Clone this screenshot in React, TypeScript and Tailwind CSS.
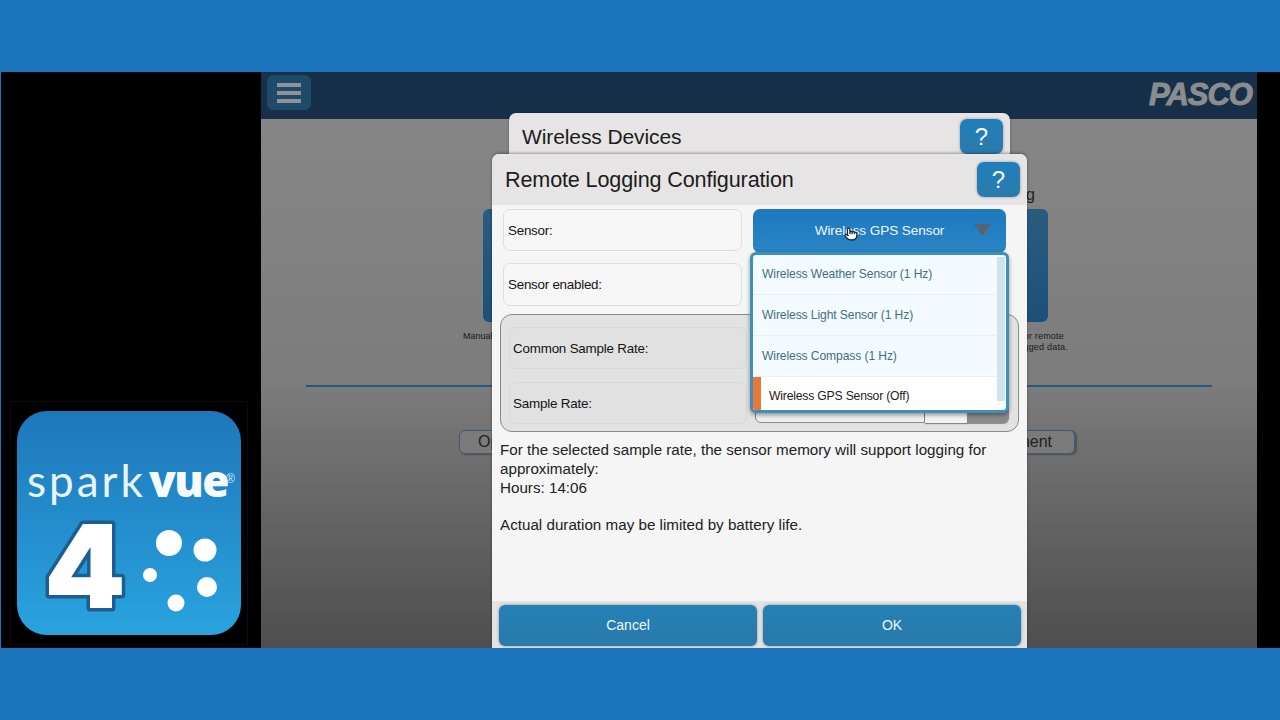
import React from "react";
import { Pointer } from "lucide-react";

const sans = "font-['Liberation_Sans',Arial,sans-serif]";

function HelpButton() {
  return (
    <div className="flex h-[35px] w-[43px] items-center justify-center rounded-[7px] bg-gradient-to-b from-[#1f7fbd] to-[#2b7bab] text-[24px] leading-none text-[#f4f8fb] shadow-[0_0_3px_rgba(0,0,0,0.35)]">
      ?
    </div>
  );
}

function LabelBox({ text, grey, short }: { text: string; grey?: boolean; short?: boolean }) {
  if (grey) {
    return (
      <div className="flex h-[42px] w-[238px] items-center rounded-[7px] border border-[#d8d8d8] bg-[#e1e1e1] pl-[3px] pt-[2px] text-[13.4px] tracking-[-0.2px] text-[#141414]">
        {text}
      </div>
    );
  }
  return (
    <div
      className={
        short
          ? "flex h-[42px] w-[239px] items-center rounded-[7px] border border-[#dedede] bg-[#f6f6f6] pl-[4px] pt-[2px] text-[13.4px] tracking-[-0.25px] text-[#141414]"
          : "flex h-[43px] w-[239px] items-center rounded-[7px] border border-[#dedede] bg-[#f6f6f6] pl-[4px] pt-[2px] text-[13.4px] tracking-[-0.25px] text-[#141414]"
      }
    >
      {text}
    </div>
  );
}

function Logo() {
  return (
    <svg width="224" height="224" viewBox="0 0 224 224" className="block">
      <defs>
        <linearGradient id="lg" x1="0" y1="0" x2="0" y2="1">
          <stop offset="0" stopColor="#1e77bb" />
          <stop offset="1" stopColor="#29a3de" />
        </linearGradient>
      </defs>
      <rect width="224" height="224" rx="30" fill="url(#lg)" />
      <text x="10" y="86" fontFamily="Lato, sans-serif" fontSize="44" fontWeight="400" fill="#e8f5fb" letterSpacing="3">
        spark
      </text>
      <text x="132" y="86" fontFamily="'Open Sans', sans-serif" fontSize="44" fontWeight="800" fill="#f4fafd" letterSpacing="-1.6">
        vue
      </text>
      <text x="209" y="72" fontFamily="'Liberation Sans', sans-serif" fontSize="12" fill="#d5ecf8">®</text>
      <text
        x="68"
        y="197"
        textAnchor="middle"
        fontFamily="Inter, sans-serif"
        fontSize="116"
        fontWeight="900"
        fill="#ffffff"
        stroke="#1c5f8f"
        strokeWidth="7"
        paintOrder="stroke"
        strokeLinejoin="round"
      >
        4
      </text>
      <circle cx="152" cy="132" r="13" fill="#fff" />
      <circle cx="188" cy="139" r="11.5" fill="#fff" />
      <circle cx="133" cy="164" r="7" fill="#fff" />
      <circle cx="190" cy="176" r="10" fill="#fff" />
      <circle cx="159" cy="192" r="8.5" fill="#fff" />
    </svg>
  );
}

function MenuItem({ text, first }: { text: string; first?: boolean }) {
  return (
    <div
      className={
        first
          ? "flex h-[40px] shrink-0 items-center border-b border-[#e3f1f8] pl-[9px] text-[12.1px] tracking-[-0.1px] text-[#456d85]"
          : "flex h-[41px] shrink-0 items-center border-b border-[#e3f1f8] pl-[9px] text-[12.1px] tracking-[-0.1px] text-[#456d85]"
      }
    >
      {text}
    </div>
  );
}

export default function App() {
  return (
    <div className={`flex h-[720px] w-[1280px] flex-col overflow-hidden bg-[#1c74bc] ${sans}`}>
      <div className="h-[72px] shrink-0" />
      <div className="flex h-[576px] shrink-0 pl-[1px]">
        {/* left black column */}
        <div className="flex w-[260px] shrink-0 items-end bg-black pb-[3px] pl-[9px]">
          <div className="border border-[#0c0c0c] pb-[9px] pl-[6px] pr-[6px] pt-[9px]">
            <Logo />
          </div>
        </div>

        {/* app */}
        <div className="relative flex w-[996px] shrink-0 flex-col overflow-hidden">
          <div className="flex h-[47px] shrink-0 items-start justify-between bg-[#16304a] pl-[6px] pr-[5px] pt-[3px]">
            <div className="flex h-[35px] w-[44px] flex-col items-center justify-center gap-[4px] rounded-[6px] border border-[#1f4a68] bg-[#1f4a69]">
              <div className="h-[4px] w-[24px] bg-[#8e9297]" />
              <div className="h-[4px] w-[24px] bg-[#8e9297]" />
              <div className="h-[4px] w-[24px] bg-[#8e9297]" />
            </div>
            <div className="pt-[4px] text-[31px] font-bold italic leading-none tracking-[-1px] text-[#8a8d90] [-webkit-text-stroke:1px_#8a8d90]">
              PASCO
            </div>
          </div>

          {/* dimmed page behind the dialogs */}
          <div className="flex flex-1 flex-col bg-gradient-to-b from-[#868686] via-[#7c7c7c] to-[#4e4e4e]">
            <div className="flex justify-center gap-[20px] pl-[13px] pt-[67px]">
              <div className="flex w-[286px] flex-col items-end">
                <div className="h-[23px]" />
                <div className="h-[113px] w-[266px] rounded-[6px] bg-gradient-to-b from-[#2a5c80] to-[#1c5078]" />
                <div className="mt-[9px] w-full text-[9px] leading-[11px] text-[#1a1a1a]">Manual</div>
              </div>
              <div className="flex w-[299px] flex-col items-start">
                <div className="h-[23px] w-[266px] text-right text-[16px] leading-[18px] text-[#222]">g</div>
                <div className="h-[113px] w-[279px] rounded-[6px] bg-gradient-to-b from-[#2a5c80] to-[#1c5078]" />
                <div className="mt-[9px] flex w-full flex-col items-end text-[9px] leading-[11px] tracking-[0.2px] text-[#1a1a1a]">
                  <div className="pr-[4px]">or remote</div>
                  <div>gged data.</div>
                </div>
              </div>
            </div>
            <div className="mx-[45px] mt-[32px] h-[2px] bg-[#1f5a80]" />
            <div className="mt-[43px] flex justify-center gap-[20px] pl-[17px]">
              <div className="flex h-[24px] w-[298px] items-center rounded-[6px] border border-[#3e5c75] bg-[#7b7b7b] pl-[18px] text-[16px] text-[#222] shadow-[1px_1px_2px_rgba(0,0,0,0.3)]">
                Op
              </div>
              <div className="flex h-[24px] w-[299px] items-center justify-end rounded-[6px] border border-r-[2px] border-[#3e5c75] bg-[#7b7b7b] pr-[22px] text-[16px] text-[#222] shadow-[1px_1px_2px_rgba(0,0,0,0.3)]">
                ment
              </div>
            </div>
          </div>

          {/* Wireless Devices dialog */}
          <div className="absolute left-[248px] top-[41px] flex h-[60px] w-[501px] items-start justify-between rounded-t-[7px] bg-[#e6e4e4] pl-[13px] pr-[7px] pt-[6px] shadow-[0_0_3px_rgba(0,0,0,0.3)]">
            <div className="pt-[5px] text-[21px] leading-[26px] tracking-[-0.1px] text-[#1c1c1c]">Wireless Devices</div>
            <HelpButton />
          </div>

          {/* Remote Logging dialog */}
          <div className="absolute left-[231px] top-[82px] flex h-[494px] w-[535px] flex-col rounded-t-[7px] bg-[#f5f5f5] shadow-[0_-1px_3px_rgba(0,0,0,0.35)]">
            <div className="flex h-[51px] shrink-0 items-start justify-between rounded-t-[7px] bg-[#e6e4e4] pl-[13px] pr-[7px] pt-[8px]">
              <div className="pt-[5px] text-[21.6px] leading-[26px] tracking-[-0.15px] text-[#1c1c1c]">Remote Logging Configuration</div>
              <HelpButton />
            </div>

            <div className="flex flex-1 flex-col pl-[8px] pr-[8px]">
              <div className="mt-[4px] flex flex-col gap-[12px] pl-[3px]">
                <LabelBox short text="Sensor:" />
                <LabelBox text="Sensor enabled:" />
              </div>

              <div className="mt-[8px] flex h-[118px] w-[519px] flex-col gap-[13px] rounded-[12px] border border-[#8a8a8a] bg-[#e2e2e2] pl-[8px] pt-[12px]">
                <LabelBox grey text="Common Sample Rate:" />
                <LabelBox grey text="Sample Rate:" />
              </div>

              <div className="mt-[9px] text-[15.2px] leading-[18.75px] text-[#222]">
                For the selected sample rate, the sensor memory will support logging for
                <br />
                approximately:
                <br />
                Hours: 14:06
                <br />
                <br />
                Actual duration may be limited by battery life.
              </div>
            </div>

            <div className="flex h-[47px] shrink-0 gap-[6px] bg-[#e3e3e3] pl-[7px] pt-[4px]">
              <div className="flex h-[41px] w-[258px] items-center justify-center rounded-[6px] bg-gradient-to-b from-[#2381b5] to-[#2a79ab] text-[14px] text-[#eef6fa] shadow-[0_0_3px_rgba(0,0,0,0.4)]">
                Cancel
              </div>
              <div className="flex h-[41px] w-[258px] items-center justify-center rounded-[6px] bg-gradient-to-b from-[#2381b5] to-[#2a79ab] text-[14px] text-[#eef6fa] shadow-[0_0_3px_rgba(0,0,0,0.4)]">
                OK
              </div>
            </div>

            {/* remaining parts of the sample rate row, under the menu */}
            <div className="absolute left-[263px] top-[254px] flex h-[15px] items-end">
              <div className="h-[15px] w-[170px] rounded-bl-[6px] border border-[#8a8a8a] bg-[#efefef]" />
              <div className="h-[15px] w-[42px] bg-[#f2f2f2] shadow-[0_1px_1px_rgba(0,0,0,0.4)]" />
              <div className="h-[15px] w-[42px] rounded-br-[6px] bg-[#8b8b8b] shadow-[0_1px_1px_rgba(0,0,0,0.4)]" />
            </div>

            {/* select button */}
            <div className="absolute left-[261px] top-[55px] flex h-[44px] w-[253px] items-center justify-center rounded-[7px] bg-gradient-to-b from-[#1e78c0] to-[#2a85c4] text-[13.6px] tracking-[-0.1px] text-[#eef6fb]">
              Wireless GPS Sensor
              <svg width="17" height="12" viewBox="0 0 17 12" className="absolute left-[221px] top-[15px]">
                <path d="M0 0H17L8.5 12Z" fill="#56626e" />
              </svg>
              <Pointer size={14} fill="#ffffff" stroke="#222222" strokeWidth={2} className="absolute left-[91px] top-[18px]" />
            </div>

            {/* dropdown menu */}
            <div className="absolute left-[258px] top-[98px] h-[161px] w-[259px] overflow-hidden rounded-[6px] border-[3px] border-[#3f8fb8] bg-[#f3fbfe] shadow-[0_2px_4px_rgba(0,0,0,0.4)]">
              <div className="flex h-full">
                <div className="flex w-[244px] flex-col">
                  <MenuItem first text="Wireless Weather Sensor (1 Hz)" />
                  <MenuItem text="Wireless Light Sensor (1 Hz)" />
                  <MenuItem text="Wireless Compass (1 Hz)" />
                  <div className="flex h-[38px] shrink-0 items-center border-l-[8px] border-[#e8773a] bg-white pl-[8px] text-[12.2px] tracking-[-0.2px] text-[#1c1c1c]">
                    Wireless GPS Sensor (Off)
                  </div>
                </div>
                <div className="mt-[2px] h-[144px] w-[8px] bg-[#cfe3ef]" />
              </div>
            </div>
          </div>
        </div>

        <div className="flex-1 bg-black" />
      </div>
      <div className="flex-1" />
    </div>
  );
}
